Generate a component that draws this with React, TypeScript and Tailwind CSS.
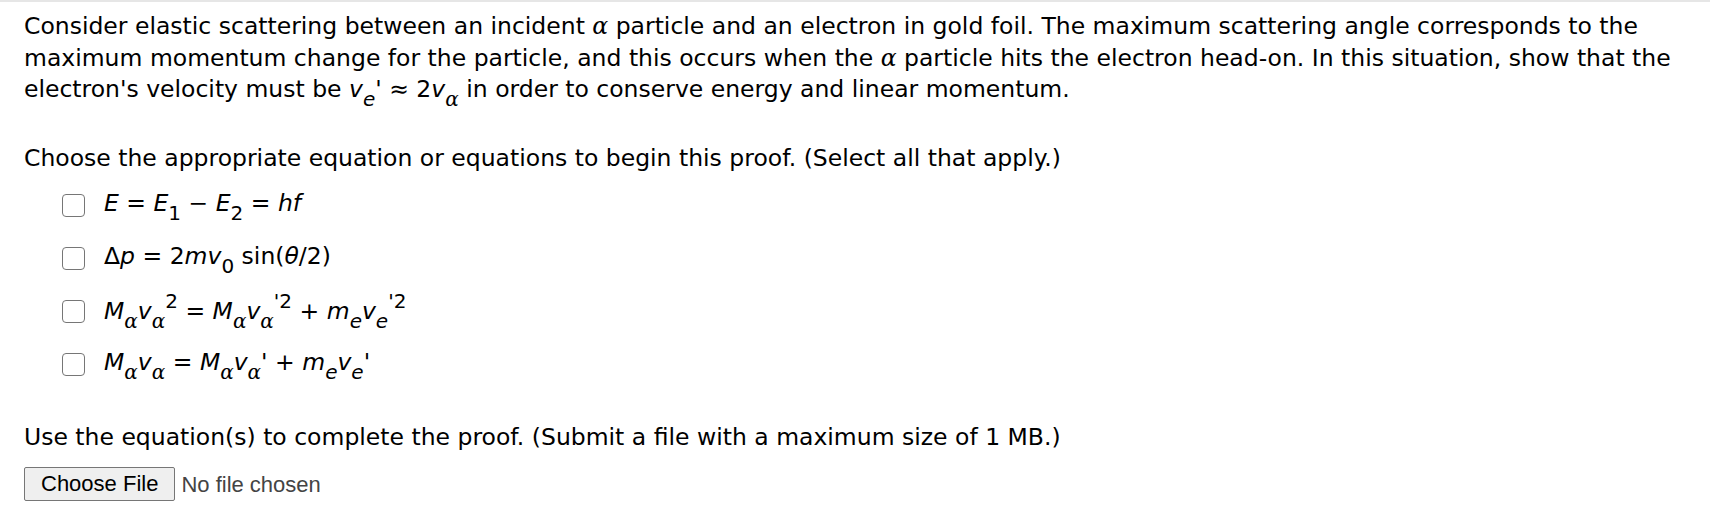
const sans = "font-['DejaVu_Sans',Verdana,sans-serif]";

function I({ children }: { children: React.ReactNode }) {
  return <i className="italic">{children}</i>;
}

// subscript / superscript done with vertical-align so they keep the line box
function Sub({ children }: { children: React.ReactNode }) {
  return <span className="text-[20px] align-[-9px] leading-none">{children}</span>;
}

function Sup({ children }: { children: React.ReactNode }) {
  return <span className="text-[20px] align-[11px] leading-none">{children}</span>;
}

function Alpha() {
  return <i className="italic font-['DejaVu_Serif',serif]">α</i>;
}

function Box() {
  return <span className="inline-block w-[23px] h-[23px] rounded-[4px] border border-[#767676] bg-white shrink-0" />;
}

const options: React.ReactNode[] = [
  <>
    <I>E</I> = <I>E</I><Sub>1</Sub> − <I>E</I><Sub>2</Sub> = <I>hf</I>
  </>,
  <>
    Δ<I>p</I> = 2<I>mv</I><Sub>0</Sub> sin(<I>θ</I>/2)
  </>,
  <>
    <I>M</I><Sub><Alpha /></Sub><I>v</I><Sub><Alpha /></Sub><Sup>2</Sup> = <I>M</I><Sub><Alpha /></Sub><I>v</I>
    <Sub><Alpha /></Sub><Sup>'2</Sup> + <I>m</I><Sub><I>e</I></Sub><I>v</I><Sub><I>e</I></Sub><Sup>'2</Sup>
  </>,
  <>
    <I>M</I><Sub><Alpha /></Sub><I>v</I><Sub><Alpha /></Sub> = <I>M</I><Sub><Alpha /></Sub><I>v</I><Sub><Alpha /></Sub>' +{" "}
    <I>m</I><Sub><I>e</I></Sub><I>v</I><Sub><I>e</I></Sub>'
  </>,
];

export default function App() {
  return (
    <div className={`${sans} text-[23.5px] text-black bg-white min-h-[515px] border-t-2 border-[#e6e6e6]`}>
      <div className="pl-6 pr-[22px] pt-[9px]">
        <p className="leading-[31.5px]">
          Consider elastic scattering between an incident <Alpha /> particle and an electron in gold foil. The
          maximum scattering angle corresponds to the maximum momentum change for the particle, and this occurs when
          the <Alpha /> particle hits the electron head-on. In this situation, show that the electron's velocity must
          be <I>v</I>
          <Sub><I>e</I></Sub>' ≈ 2<I>v</I>
          <Sub><Alpha /></Sub> in order to conserve energy and linear momentum.
        </p>

        <p className="mt-[34px] leading-[31.5px]">
          Choose the appropriate equation or equations to begin this proof. (Select all that apply.)
        </p>

        <ul className="mt-[4px] pl-[38px] flex flex-col">
          {options.map((o, i) => (
            <li key={i} className="flex items-center gap-[19px] h-[53px]">
              <Box />
              <span className="whitespace-nowrap leading-[31.5px]">{o}</span>
            </li>
          ))}
        </ul>

        <p className="mt-[31px] leading-[31.5px]">
          Use the equation(s) to complete the proof. (Submit a file with a maximum size of 1 MB.)
        </p>

        <div className="mt-[14px] flex items-center gap-[6px] font-['Liberation_Sans',Arial,sans-serif] text-[22px]">
          <button className="h-[34px] px-[16px] bg-[#efefef] border border-[#767676] rounded-[2px] leading-none">
            Choose File
          </button>
          <span className="text-[#444]">No file chosen</span>
        </div>
      </div>
    </div>
  );
}
